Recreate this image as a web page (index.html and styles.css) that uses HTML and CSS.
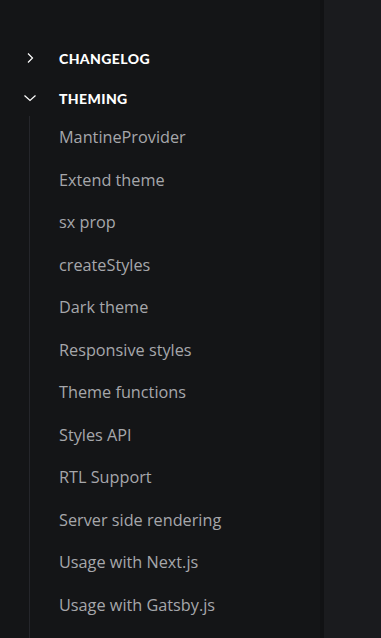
FILE: index.html
```html
<!DOCTYPE html>
<html>
<head>
<meta charset="utf-8">
<link rel="stylesheet" href="styles.css">
</head>
<body>
<div class="layout">
  <nav class="sidebar">
    <div class="group">
      <div class="group-header">
        <svg class="chev" width="12" height="12" viewBox="0 0 12 12"><path d="M4 1.5 L8.5 6 L4 10.5" fill="none" stroke="#fff" stroke-width="1.2"/></svg>
        <span class="group-title">Changelog</span>
      </div>
    </div>
    <div class="group">
      <div class="group-header">
        <svg class="chev" width="12" height="12" viewBox="0 0 12 12"><path d="M0.5 3.5 L6 8.5 L11.5 3.5" fill="none" stroke="#fff" stroke-width="1.2"/></svg>
        <span class="group-title">Theming</span>
      </div>
      <ul class="items">
        <li>MantineProvider</li>
        <li>Extend theme</li>
        <li>sx prop</li>
        <li>createStyles</li>
        <li>Dark theme</li>
        <li>Responsive styles</li>
        <li>Theme functions</li>
        <li>Styles API</li>
        <li>RTL Support</li>
        <li>Server side rendering</li>
        <li>Usage with Next.js</li>
        <li>Usage with Gatsby.js</li>
      </ul>
    </div>
  </nav>
  <div class="divider"></div>
  <main class="content"></main>
</div>
</body>
</html>
```
FILE: styles.css
```css
html, body {
  margin: 0;
  padding: 0;
  height: 100%;
  background: #1a1b1e;
  overflow: hidden;
}
.layout {
  display: flex;
  height: 638px;
}
.sidebar {
  width: 320px;
  background: #141517;
  padding-top: 38px;
  box-sizing: border-box;
}
.divider {
  width: 4px;
  background: #111214;
}
.content {
  flex: 1;
  background: #1a1b1e;
}
.group-header {
  display: flex;
  align-items: center;
  height: 40px;
  padding-left: 24px;
}
.chev {
  width: 12px;
  height: 12px;
  margin-right: 23px;
}
.group-title {
  font-family: "Lato", sans-serif;
  font-weight: 900;
  font-size: 14px;
  text-transform: uppercase;
  color: #ffffff;
  letter-spacing: 0.4px;
}
.items {
  list-style: none;
  margin: -2px 0 0 29px;
  padding: 0 0 12px 0;
  border-left: 1px solid #25262b;
}
.items li {
  height: 42.5px;
  display: flex;
  align-items: center;
  padding-left: 29px;
  font-family: "Open Sans", sans-serif;
  font-size: 16.25px;
  color: #a6a7ab;
}
```
